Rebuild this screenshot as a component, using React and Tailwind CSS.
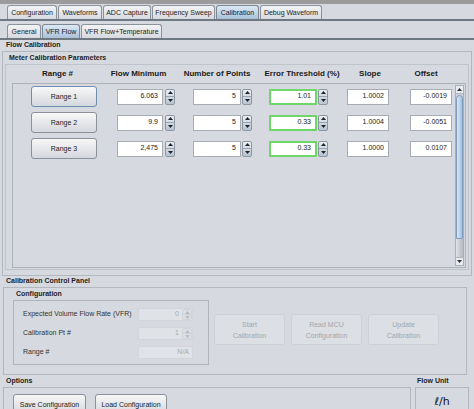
import React from "react";

// Swing-like "VFR Flow" calibration panel

const TOP_TABS = [
  { label: "Configuration", w: "w-[50px]" },
  { label: "Waveforms", w: "w-[44px]" },
  { label: "ADC Capture", w: "w-[48px]" },
  { label: "Frequency Sweep", w: "w-[63px]" },
  { label: "Calibration", w: "w-[43px]", active: true },
  { label: "Debug Waveform", w: "w-[62px]" },
];

const SUB_TABS = [
  { label: "General", w: "w-[34px]" },
  { label: "VFR Flow", w: "w-[38px]", active: true },
  { label: "VFR Flow+Temperature", w: "w-[81px]" },
];

const ROWS = [
  { name: "Range 1", min: "6.063", pts: "5", err: "1.01", slope: "1.0002", offset: "-0.0019", focus: true },
  { name: "Range 2", min: "9.9", pts: "5", err: "0.33", slope: "1.0004", offset: "-0.0051" },
  { name: "Range 3", min: "2,475", pts: "5", err: "0.33", slope: "1.0000", offset: "0.0107" },
];

function Tab({ label, w, active }) {
  return (
    <div
      className={`${w} h-[14px] flex items-center justify-center border border-b-0 rounded-t-[3px] text-[7px] leading-none whitespace-nowrap ${
        active
          ? "border-[#7e8894] bg-linear-to-b from-[#dde8f3] to-[#a9c1da] text-[#1a1a1a]"
          : "border-[#8c929a] bg-linear-to-b from-[#f3f4f6] to-[#d6d9de] text-[#222]"
      }`}
    >
      {label}
    </div>
  );
}

function Tri({ down, color = "#222" }) {
  return (
    <svg width="5" height="3" viewBox="0 0 5 3">
      <path d={down ? "M0 0 L5 0 L2.5 3Z" : "M0 3 L5 3 L2.5 0Z"} fill={color} />
    </svg>
  );
}

function Spin({ disabled }) {
  return (
    <div
      className={`w-[10px] h-full flex flex-col border rounded-[2px] ${
        disabled
          ? "border-[#d0d3d8] bg-[#dcdfe4]"
          : "border-[#8d97a3] bg-linear-to-b from-[#e9eff5] to-[#b7c4d2]"
      }`}
    >
      <div className={`flex-1 flex items-center justify-center border-b ${disabled ? "border-[#d0d3d8]" : "border-[#9aa4af]"}`}>
        <Tri color={disabled ? "#b9bdc3" : "#222"} />
      </div>
      <div className="flex-1 flex items-center justify-center">
        <Tri down color={disabled ? "#b9bdc3" : "#222"} />
      </div>
    </div>
  );
}

function Field({ value, w, green }) {
  return (
    <div
      className={`${w} h-[16px] bg-white flex items-center justify-end pr-[4px] text-[7px] text-[#222] ${
        green ? "border-2 border-[#6fd66a]" : "border border-[#a8adb4]"
      }`}
    >
      {value}
    </div>
  );
}

function Button({ children, w, h, focus, disabled }) {
  return (
    <div
      className={`${w} ${h} shrink-0 rounded-[3px] border flex items-center justify-center text-center text-[7px] leading-[11px] ${
        disabled
          ? "border-[#cdd1d7] bg-[#dcdfe4] text-[#a3a7ad]"
          : focus
          ? "border-[#6f8db0] bg-linear-to-b from-[#f8f8f8] to-[#d4d7dc] text-[#222]"
          : "border-[#8b9199] bg-linear-to-b from-[#f8f8f8] to-[#d4d7dc] text-[#222]"
      }`}
    >
      {children}
    </div>
  );
}

function Scrollbar() {
  return (
    <div className="w-[9px] mr-[1px] my-[1px] shrink-0 flex flex-col border border-[#a9afb7] bg-[#cfd3d9]">
      <div className="h-[8px] flex items-center justify-center bg-[#e8ebef] border-b border-[#b0b6bd]">
        <Tri color="#333" />
      </div>
      <div className="flex-1 rounded-t-[5px] mt-[1px] border border-[#7d9bbd] bg-linear-to-r from-[#d9e7f4] to-[#a4c0dc]" />
      <div className="h-[18px] bg-linear-to-r from-[#e0e2e5] to-[#b4b8be]" />
      <div className="h-[8px] flex items-center justify-center bg-[#e8ebef] border-t border-[#b0b6bd]">
        <Tri down color="#333" />
      </div>
    </div>
  );
}

function ConfigRow({ label, value, spin }) {
  return (
    <div className="h-[19px] flex items-center">
      <div className="w-[115px] text-[7px] text-[#333]">{label}</div>
      <div className="w-[55px] h-[13px] flex bg-[#dfe2e6] border border-[#d2d5da]">
        <div className="flex-1 flex items-center justify-end pr-[3px] text-[7px] text-[#a9adb3]">{value}</div>
        {spin && <Spin disabled />}
      </div>
    </div>
  );
}

export default function App() {
  return (
    <div className="w-[474px] h-[409px] overflow-hidden bg-[#d6d9df] font-['Liberation_Sans',Arial,sans-serif] text-[#1e1e1e] flex flex-col">
      <div className="h-[4px] shrink-0 bg-[#9b9b9b]" />

      {/* main tabs */}
      <div className="h-[15px] shrink-0 flex items-end pl-[7px] gap-[1px]">
        {TOP_TABS.map((t) => (
          <Tab key={t.label} {...t} />
        ))}
      </div>
      <div className="h-[2px] shrink-0 bg-[#6f7781]" />
      <div className="h-[3px] shrink-0" />

      {/* sub tabs */}
      <div className="h-[14px] shrink-0 flex items-end pl-[7px] gap-[1px]">
        {SUB_TABS.map((t) => (
          <Tab key={t.label} {...t} />
        ))}
      </div>
      <div className="h-[2px] shrink-0 bg-[#6f7781]" />

      <div className="h-[11px] shrink-0 pl-[6px] flex items-center text-[7px] font-bold">Flow Calibration</div>

      {/* Flow calibration box */}
      <div className="mx-[2px] shrink-0 border border-[#b3b7be] flex flex-col pb-[5px]">
        <div className="h-[12px] pl-[6px] flex items-center text-[7px] font-bold">Meter Calibration Parameters</div>
        <div className="mx-[2px] border border-[#c0c4ca] flex flex-col pb-[1px]">
          <div className="h-[18px] flex items-center pl-[6px] text-[8px] font-bold text-[#1a1a1a]">
            <div className="w-[91px] text-center">Range #</div>
            <div className="w-[71px] text-center">Flow Minimum</div>
            <div className="w-[86px] text-center">Number of Points</div>
            <div className="w-[84px] text-center">Error Threshold (%)</div>
            <div className="w-[52px] text-center">Slope</div>
            <div className="w-[60px] text-center">Offset</div>
          </div>
          <div className="ml-[6px] mr-[2px] h-[185px] border border-[#acb1b8] flex">
            <div className="flex-1 flex flex-col pt-[2px] gap-[5px]">
              {ROWS.map((r) => (
                <div key={r.name} className="h-[21px] flex items-center">
                  <div className="ml-[18px]">
                    <Button w="w-[66px]" h="h-[21px]" focus={r.focus}>{r.name}</Button>
                  </div>
                  <div className="ml-[20px] h-[16px] flex gap-[2px]">
                    <Field w="w-[46px]" value={r.min} />
                    <Spin />
                  </div>
                  <div className="ml-[18px] h-[16px] flex gap-[1px]">
                    <Field w="w-[48px]" value={r.pts} />
                    <Spin />
                  </div>
                  <div className="ml-[17px] h-[16px] flex gap-[1px]">
                    <Field w="w-[48px]" value={r.err} green />
                    <Spin />
                  </div>
                  <div className="ml-[19px]">
                    <Field w="w-[42px]" value={r.slope} />
                  </div>
                  <div className="ml-[21px]">
                    <Field w="w-[42px]" value={r.offset} />
                  </div>
                </div>
              ))}
            </div>
            <Scrollbar />
          </div>
        </div>
      </div>

      <div className="h-[11px] shrink-0 pl-[6px] flex items-center text-[7px] font-bold">Calibration Control Panel</div>

      {/* control panel */}
      <div className="ml-[3px] mr-[7px] shrink-0 border border-[#b3b7be] flex flex-col pb-[9px]">
        <div className="h-[12px] pl-[12px] flex items-center text-[7px] font-bold">Configuration</div>
        <div className="flex">
          <div className="ml-[9px] w-[196px] h-[65px] border border-[#b0b4bb] flex flex-col pl-[9px] pt-[4px]">
            <ConfigRow label="Expected Volume Flow Rate (VFR)" value="0" spin />
            <ConfigRow label="Calibration Pt #" value="1" spin />
            <ConfigRow label="Range #" value="N/A" />
          </div>
          <div className="ml-[5px] mt-[14px] flex gap-[6px]">
            <Button w="w-[71px]" h="h-[31px]" disabled>Start<br />Calibration</Button>
            <Button w="w-[71px]" h="h-[31px]" disabled>Read MCU<br />Configuration</Button>
            <Button w="w-[71px]" h="h-[31px]" disabled>Update<br />Calibration</Button>
          </div>
        </div>
      </div>

      {/* options + flow unit */}
      <div className="flex shrink-0">
        <div className="ml-[3px] w-[408px] flex flex-col">
          <div className="h-[12px] pl-[3px] flex items-center text-[7px] font-bold">Options</div>
          <div className="h-[40px] border border-[#b3b7be] flex gap-[9px] pl-[9px] pt-[6px]">
            <Button w="w-[73px]" h="h-[21px]">Save Configuration</Button>
            <Button w="w-[72px]" h="h-[21px]">Load Configuration</Button>
          </div>
        </div>
        <div className="ml-[4px] w-[54px] flex flex-col">
          <div className="h-[12px] pl-[2px] flex items-center text-[7px] font-bold whitespace-nowrap">Flow Unit</div>
          <div className="h-[40px] border border-[#b3b7be] flex justify-center pt-[8px] text-[11px] leading-[12px] text-[#111] font-['DejaVu_Sans',sans-serif]">
            ℓ/h
          </div>
        </div>
      </div>
    </div>
  );
}
